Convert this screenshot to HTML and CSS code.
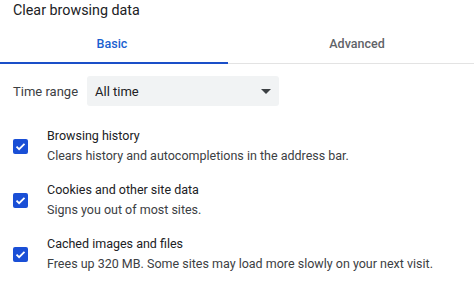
FILE: index.html
```html
<!DOCTYPE html>
<html>
<head>
<meta charset="utf-8">
<link rel="stylesheet" href="styles.css">
</head>
<body>
<div class="dialog">
  <div class="title">Clear browsing data</div>
  <div class="tabs">
    <div class="tab active">Basic</div>
    <div class="tab">Advanced</div>
  </div>
  <div class="range">
    <span class="range-label">Time range</span>
    <div class="select">
      <span>All time</span>
      <svg class="caret" width="10" height="5" viewBox="0 0 10 5"><path d="M0 0h10L5 5z" fill="#3c4043"/></svg>
    </div>
  </div>
  <div class="items">
    <div class="item">
      <div class="check"><svg width="15" height="15" viewBox="0 0 15 15"><path d="M3.5 7.6l2.6 2.6 5.4-5.4" fill="none" stroke="#fff" stroke-width="1.8"/></svg></div>
      <div class="text">
        <div class="label">Browsing history</div>
        <div class="desc">Clears history and autocompletions in the address bar.</div>
      </div>
    </div>
    <div class="item">
      <div class="check"><svg width="15" height="15" viewBox="0 0 15 15"><path d="M3.5 7.6l2.6 2.6 5.4-5.4" fill="none" stroke="#fff" stroke-width="1.8"/></svg></div>
      <div class="text">
        <div class="label">Cookies and other site data</div>
        <div class="desc">Signs you out of most sites.</div>
      </div>
    </div>
    <div class="item">
      <div class="check"><svg width="15" height="15" viewBox="0 0 15 15"><path d="M3.5 7.6l2.6 2.6 5.4-5.4" fill="none" stroke="#fff" stroke-width="1.8"/></svg></div>
      <div class="text">
        <div class="label">Cached images and files</div>
        <div class="desc">Frees up 320 MB. Some sites may load more slowly on your next visit.</div>
      </div>
    </div>
  </div>
</div>
</body>
</html>
```

FILE: styles.css
```css
html, body {
  margin: 0;
  padding: 0;
  background: #fff;
}
body {
  font-family: Roboto, "Liberation Sans", Arial, sans-serif;
  color: #202124;
  width: 474px;
  height: 286px;
  overflow: hidden;
}
.title {
  font-size: 14.3px;
  line-height: 20px;
  padding: 0 0 0 13px;
  color: #202124;
}
.tabs {
  display: flex;
  height: 42px;
  margin-top: 1px;
  border-bottom: 1px solid #e3e3e3;
}
.tab {
  width: 246px;
  display: flex;
  align-items: center;
  justify-content: center;
  font-size: 12.5px;
  font-weight: 500;
  color: #5f6368;
  box-sizing: border-box;
  padding-top: 2px;
}
.tab.active {
  width: 228px;
  color: #1a5fd0;
  border-bottom: 2px solid #1a4fc8;
  margin-bottom: -1px;
  padding-top: 3px;
  padding-right: 4px;
}
.tab + .tab {
  padding-left: 12px;
  flex: 1;
}
.range {
  display: flex;
  align-items: center;
  padding-left: 13px;
  margin-top: 12px;
  height: 30px;
}
.range-label {
  font-size: 13px;
  width: 74px;
  color: #3c4043;
}
.select {
  width: 192px;
  height: 30px;
  background: #f1f3f4;
  border-radius: 3px;
  display: flex;
  align-items: center;
  justify-content: space-between;
  padding: 0 8px;
  box-sizing: border-box;
  font-size: 13px;
  color: #202124;
}
.caret {
  margin-right: 0px;
}
.items {
  margin-top: 13px;
}
.item {
  display: flex;
  align-items: center;
  height: 54px;
  padding-left: 13px;
}
.check {
  width: 15px;
  height: 15px;
  background: #1a4fd6;
  border-radius: 2px;
  margin-right: 19px;
  flex: none;
}
.check svg {
  display: block;
}
.text {
  font-size: 12.5px;
  line-height: 20px;
  color: #3c4043;
}
.label {
  color: #202124;
}
.desc {
  color: #3c4043;
}
```
